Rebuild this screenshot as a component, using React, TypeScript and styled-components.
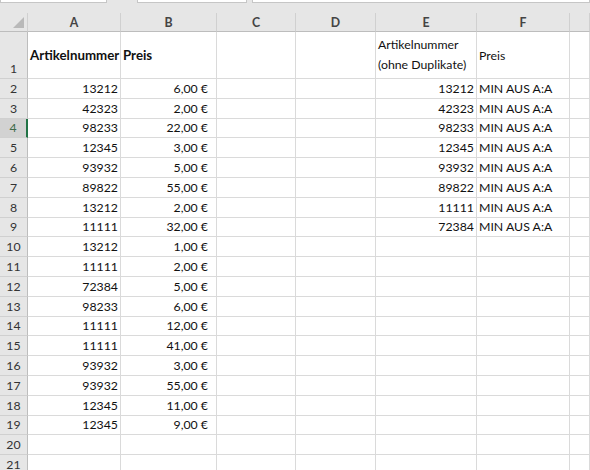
import React from 'react'
import styled, { createGlobalStyle } from 'styled-components'

const GlobalStyle = createGlobalStyle`
  html, body {
    margin: 0;
    padding: 0;
    background: #ffffff;
    overflow: hidden;
  }
  body {
    font-family: Lato, "Liberation Sans", sans-serif;
  }
`

const colA = [13212, 42323, 98233, 12345, 93932, 89822, 13212, 11111, 13212, 11111, 72384, 98233, 11111, 11111, 93932, 93932, 12345, 12345]
const colB = [6, 2, 22, 3, 5, 55, 2, 32, 1, 2, 5, 6, 12, 41, 3, 55, 11, 9]
const colE = [13212, 42323, 98233, 12345, 93932, 89822, 11111, 72384]
const letters = ['A', 'B', 'C', 'D', 'E', 'F', '']

const euro = (v: number) => `${v},00 €`

const App = () => {
  const rows = []
  for (let r = 2; r <= 21; r++) {
    const i = r - 2
    rows.push(
      <React.Fragment key={r}>
        <RowHead $active={r === 4}>{r}</RowHead>
        <Cell $align="right">{colA[i] ?? ''}</Cell>
        <Cell $align="right" $pad={8}>{colB[i] !== undefined ? euro(colB[i]) : ''}</Cell>
        <Cell />
        <Cell />
        <Cell $align="right">{colE[i] ?? ''}</Cell>
        <Cell>{colE[i] ? 'MIN AUS A:A' : ''}</Cell>
        <Cell />
      </React.Fragment>
    )
  }

  return (
    <Page>
      <GlobalStyle />
      <TopStrip>
        <TabBox $w={105} />
        <TabBox $w={108} $ml={30} />
        <TabBox $ml={5} $grow />
      </TopStrip>
      <Sheet>
        <Corner>
          <Triangle />
        </Corner>
        {letters.map((l, i) => (
          <ColHead key={i}>{l}</ColHead>
        ))}

        <RowHead $tall>1</RowHead>
        <Cell $bold>Artikelnummer</Cell>
        <Cell $bold>Preis</Cell>
        <Cell />
        <Cell />
        <Cell $wrap>Artikelnummer (ohne Duplikate)</Cell>
        <Cell>Preis</Cell>
        <Cell />

        {rows}
      </Sheet>
    </Page>
  )
}

export default App

const Page = styled.div`
  width: 590px;
  height: 470px;
  overflow: hidden;
  background: #ffffff;
`

const TopStrip = styled.div`
  height: 13px;
  background: #e6e6e6;
  display: flex;
  align-items: flex-start;
`

const TabBox = styled.div<{ $w?: number; $ml?: number; $grow?: boolean }>`
  width: ${p => (p.$w ? `${p.$w}px` : 'auto')};
  flex: ${p => (p.$grow ? 1 : 'none')};
  margin-left: ${p => p.$ml || 0}px;
  height: 2px;
  background: #ffffff;
  border: 1px solid #c6c6c6;
  border-top: none;
`

const Sheet = styled.div`
  display: grid;
  grid-template-columns: 28px 93px 96px 79px 80px 101px 93px 20px;
  grid-template-rows: 19px 47px;
  grid-auto-rows: 19.8px;
  font-size: 12.3px;
  color: #111111;
`

const Corner = styled.div`
  background: #e6e6e6;
  border-right: 1px solid #d0d0d0;
  border-bottom: 1px solid #bdbdbd;
  display: flex;
  justify-content: flex-end;
  align-items: flex-end;
  padding: 0 3px 3px 0;
`

const Triangle = styled.div`
  width: 0;
  height: 0;
  border-left: 11px solid transparent;
  border-bottom: 11px solid #b9b9b9;
`

const ColHead = styled.div`
  background: #e6e6e6;
  border-right: 1px solid #d0d0d0;
  border-bottom: 1px solid #bdbdbd;
  display: flex;
  align-items: center;
  justify-content: center;
  font-size: 12.3px;
  font-weight: 700;
  color: #444444;
`

const RowHead = styled.div<{ $active?: boolean; $tall?: boolean }>`
  background: ${p => (p.$active ? '#d2d2d2' : '#e6e6e6')};
  border-bottom: 1px solid #d0d0d0;
  border-right: ${p => (p.$active ? '2px solid #217346' : '1px solid #bdbdbd')};
  display: flex;
  justify-content: center;
  align-items: ${p => (p.$tall ? 'flex-end' : 'center')};
  padding-bottom: ${p => (p.$tall ? '2px' : '0')};
  font-size: 12.3px;
  color: ${p => (p.$active ? '#3f6b4b' : '#333333')};
`

const Cell = styled.div<{ $align?: 'left' | 'right'; $pad?: number; $bold?: boolean; $wrap?: boolean }>`
  border-right: 1px solid #dadada;
  border-bottom: 1px solid #dadada;
  display: flex;
  align-items: center;
  justify-content: ${p => (p.$align === 'right' ? 'flex-end' : 'flex-start')};
  padding: 0 ${p => p.$pad ?? 2}px 0 2px;
  font-weight: ${p => (p.$bold ? 700 : 400)};
  font-size: ${p => (p.$bold ? '13.3px' : '12.3px')};
  white-space: ${p => (p.$wrap ? 'normal' : 'nowrap')};
  line-height: ${p => (p.$wrap ? '20px' : 'normal')};
  overflow: visible;
  min-width: 0;
`
